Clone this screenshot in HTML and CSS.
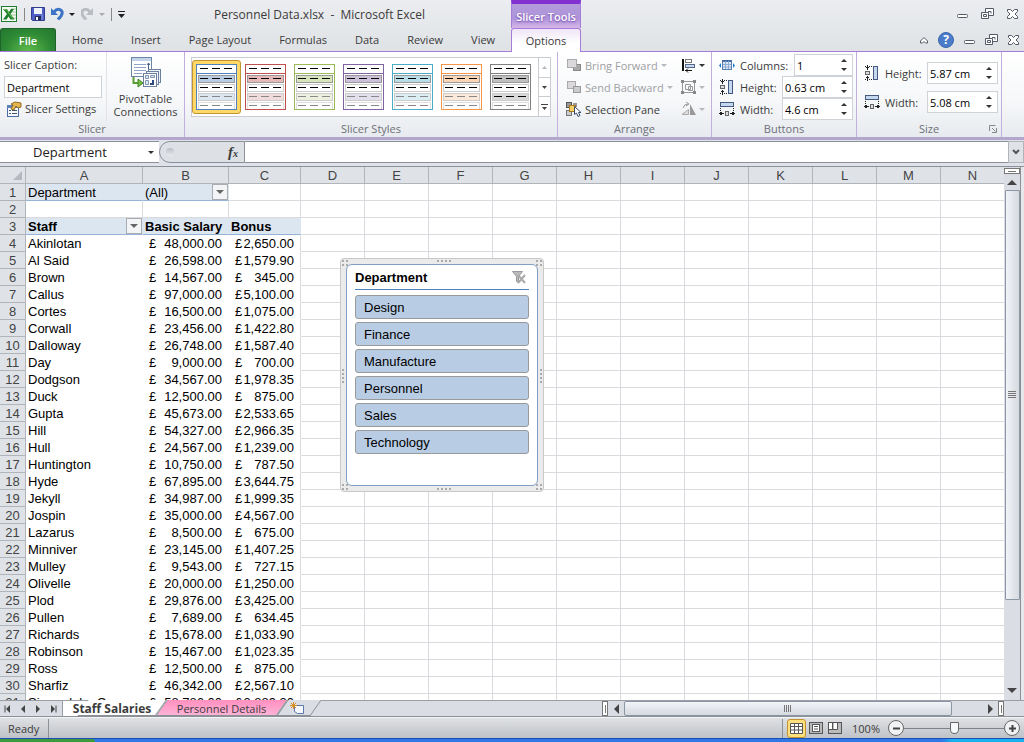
FILE: index.html
```html
<!DOCTYPE html>
<html lang="en">
<head>
    <meta charset="UTF-8">
    <meta name="viewport" content="width=device-width, initial-scale=1.0">
    <title>Personnel Data.xlsx - Microsoft Excel</title>
    <link rel="stylesheet" href="styles.css">
</head>
<body>

    <!-- shared icon shapes -->
    <svg class="defs" width="0" height="0" aria-hidden="true">
        <symbol id="thumb" viewBox="0 0 41 46">
            <rect x="0.5" y="0.5" width="40" height="45" fill="#fff" stroke="var(--edge)"/>
            <path d="M0 9.5h41" stroke="var(--edge)"/>
            <rect x="2.5" y="11.5" width="36" height="7" fill="var(--fill)" stroke="#999"/>
            <rect x="2.5" y="20.5" width="36" height="7" fill="#fff" stroke="#ccc"/>
            <rect x="2.5" y="29.5" width="36" height="7" fill="var(--pale)" stroke="#ccc"/>
            <path d="M2.5 45v-6.5h36v6.5" fill="#fff" stroke="#ddd"/>
            <path d="M4 4.5h8m4 0h8m4 0h8M4 14.5h8m4 0h8m4 0h8M4 23.5h8m4 0h8m4 0h8" stroke="#000"/>
            <path d="M4 32.5h8m4 0h8m4 0h8" stroke="var(--dash)"/>
            <path d="M4 41.5h8m4 0h8m4 0h8" stroke="#888"/>
        </symbol>
        <symbol id="row-height" viewBox="0 0 16 16">
            <path d="M1 1.5h8M1 14.5h8" stroke="#222" stroke-dasharray="1 1"/>
            <path d="M3.5 0v5M3.5 11v5" stroke="#222"/>
            <path d="M2 2.5h3M2 12.5h3" stroke="#222"/>
            <rect x="1.5" y="6.5" width="4" height="3" fill="#ddd" stroke="#666"/>
            <rect x="9.5" y="1.5" width="4" height="13" fill="#c5d8ee" stroke="#455a80"/>
        </symbol>
        <symbol id="col-width" viewBox="0 0 16 16">
            <rect x="1.5" y="1.5" width="13" height="4" fill="#c5d8ee" stroke="#455a80"/>
            <path d="M1.5 7v8M14.5 7v8" stroke="#222" stroke-dasharray="1 1"/>
            <path d="M0 12.5h5M11 12.5h5" stroke="#222"/>
            <path d="M2.5 11v3M13.5 11v3" stroke="#222"/>
            <rect x="6.5" y="10.5" width="3" height="4" fill="#ddd" stroke="#666"/>
        </symbol>
        <symbol id="minimize" viewBox="0 0 13 12">
            <rect x="1.5" y="6.5" width="10" height="3" rx="1" fill="#fff" stroke="#555b66"/>
        </symbol>
        <symbol id="restore" viewBox="0 0 13 12">
            <path d="M4.5 0.5h8v7h-8z" fill="#fff" stroke="#555b66"/>
            <path d="M7 3.5h3v2" fill="none" stroke="#555b66"/>
            <path d="M0.5 4.5h7v6h-7z" fill="#fff" stroke="#555b66"/>
            <path d="M2.5 6.5h3v2h-3z" fill="#fff" stroke="#555b66"/>
        </symbol>
        <symbol id="close" viewBox="0 0 13 12">
            <path d="M1.5 1.5h3l2 2 2-2h3v2l-2.500 2.500 2.500 2.500v2h-3l-2-2-2 2h-3v-2l2.500-2.500-2.500-2.500z" fill="#fff" stroke="#555b66"/>
        </symbol>
    </svg>

    <header class="header">
        <div class="titlebar">
            <div class="quick-access">
                <svg width="17" height="17" viewBox="0 0 17 17">
                    <rect x="0.5" y="0.5" width="15" height="15" fill="#f4f9f1" stroke="#1f7a33"/>
                    <path d="M10 3h5M10 6h5M10 9h5M10 12h5" stroke="#9bc79a"/>
                    <path d="M2 3h4l2 3 2-3h3l-3.500 5 4 5.500h-4l-2-3-2 3h-3.500l4-5.500z" fill="#1d7e2f"/>
                    <path d="M3 3.5h2.500l6 9" fill="none" stroke="#6cc04e"/>
                </svg>
                <i class="bar"></i>
                <button class="plain" aria-label="Save">
                    <svg width="14" height="14" viewBox="0 0 14 14">
                        <path d="M0.5 0.5h13v13h-12l-1-1z" fill="#4f5fc4" stroke="#333c8e"/>
                        <rect x="3" y="1" width="8" height="6" fill="#eef2fb"/>
                        <path d="M11 7v6" stroke="#8b98e0"/>
                        <rect x="4" y="9" width="6" height="4" fill="#222a5c"/>
                        <rect x="5" y="10" width="2" height="3" fill="#fff"/>
                    </svg>
                </button>
                <button class="plain undo" aria-label="Undo">
                    <svg width="24" height="14" viewBox="0 0 24 14">
                        <path d="M3 5c4-5 9-2 8 2-1 3-3 4-4 5.500" fill="none" stroke="#3d73c4" stroke-width="3"/>
                        <path d="M0 1v7h7z" fill="#3d73c4"/>
                        <path d="M18 6h6l-3 3z" fill="#222"/>
                    </svg>
                </button>
                <button class="plain redo" aria-label="Redo">
                    <svg width="24" height="14" viewBox="0 0 24 14">
                        <path d="M9 5c-4-5-9-2-8 2 1 3 3 4 4 5.500" fill="none" stroke="#b9bcc1" stroke-width="3"/>
                        <path d="M12 1v7h-7z" fill="#b9bcc1"/>
                        <path d="M18 6h6l-3 3z" fill="#aaa"/>
                    </svg>
                </button>
                <i class="bar"></i>
                <button class="plain" aria-label="Customize toolbar">
                    <svg width="7" height="8" viewBox="0 0 7 8"><path d="M0 1.5h7" stroke="#222"/><path d="M0 4h7l-3.500 4z" fill="#222"/></svg>
                </button>
            </div>
            <h1 class="title">Personnel Data.xlsx&nbsp; -&nbsp; Microsoft Excel</h1>
        </div>
        <div class="context-title">Slicer Tools</div>
        <div class="window-buttons">
            <button class="plain" aria-label="Minimize"><svg width="13" height="12"><use href="#minimize"/></svg></button>
            <button class="plain" aria-label="Restore"><svg width="13" height="12"><use href="#restore"/></svg></button>
            <button class="plain" aria-label="Close"><svg width="13" height="12"><use href="#close"/></svg></button>
        </div>

        <nav class="tabs">
            <a class="tab file" href="#">File</a>
            <a class="tab" href="#">Home</a>
            <a class="tab" href="#">Insert</a>
            <a class="tab" href="#">Page Layout</a>
            <a class="tab" href="#">Formulas</a>
            <a class="tab" href="#">Data</a>
            <a class="tab" href="#">Review</a>
            <a class="tab" href="#">View</a>
        </nav>
        <a class="context-tab" href="#">Options</a>
        <div class="book-buttons">
            <button class="plain" aria-label="Minimize ribbon">
                <svg width="10" height="8" viewBox="0 0 10 8"><path d="M1.5 5l3.500-3.500 3.500 3.500v2h-2l-1.500-1.500-1.500 1.500h-2z" fill="#fff" stroke="#555b66"/></svg>
            </button>
            <button class="help" aria-label="Help">?</button>
            <button class="plain" aria-label="Minimize workbook"><svg width="13" height="12"><use href="#minimize"/></svg></button>
            <button class="plain" aria-label="Restore workbook"><svg width="13" height="12"><use href="#restore"/></svg></button>
            <button class="plain" aria-label="Close workbook"><svg width="13" height="12"><use href="#close"/></svg></button>
        </div>
    </header>

    <section class="ribbon">
        <div class="group slicer-group">
            <div class="group-body">
                <div class="caption-box">
                    <label for="caption">Slicer Caption:</label>
                    <input class="box" id="caption" type="text" value="Department">
                    <button class="command">
                        <svg width="16" height="16" viewBox="0 0 16 16">
                            <rect x="1.5" y="4.5" width="11" height="11" fill="#f5f8fd" stroke="#4d6ea3"/>
                            <rect x="1" y="4" width="12" height="3" fill="#5d83bb"/>
                            <path d="M3 9.5h2M3 12.5h2M6 9.5h5M6 12.5h5" stroke="#456"/>
                            <path d="M5 3l4-2 6 1v4l-3 1-2-2-2 4-3-1 2-4z" fill="#e5b54d" stroke="#8f6a24"/>
                        </svg>
                        Slicer Settings
                    </button>
                </div>
                <button class="big-command">
                    <svg width="30" height="31" viewBox="0 0 30 31">
                        <rect x="0.5" y="0.5" width="20" height="19" fill="#fff" stroke="#6c86a8"/>
                        <rect x="1" y="1" width="19" height="3" fill="#c3d3e8"/>
                        <path d="M3 7.5h12M3 10.5h12M3 13.5h12M3 16.5h8" stroke="#8da6c8"/>
                        <path d="M17.5 6v10M16 8l1.500-2 1.500 2" fill="none" stroke="#4a6288"/>
                        <rect x="17.5" y="12.5" width="12" height="13" fill="#eef3f9" stroke="#6c7f9c"/>
                        <rect x="15.5" y="14.5" width="12" height="13" fill="#eef3f9" stroke="#6c7f9c"/>
                        <rect x="12.5" y="16.5" width="13" height="13" fill="#fff" stroke="#6c7f9c"/>
                        <path d="M14.5 18.5h3v3h-3zM19.5 18.5h4v2h-4zM14.5 23.5h3v4h-3z" fill="#dbe5f2" stroke="#8296b5"/>
                        <path d="M19 27h3v-4" fill="none" stroke="#2b4a80" stroke-width="2"/>
                        <path d="M2.5 20v6h5" fill="none" stroke="#5a9c33" stroke-width="2"/>
                        <path d="M7 22l5 4-5 4z" fill="#76c043" stroke="#3f8425"/>
                    </svg>
                    <span>PivotTable<br>Connections</span>
                </button>
            </div>
            <h2>Slicer</h2>
        </div>

        <div class="group styles-group">
            <div class="gallery">
                <button class="style blue selected" aria-label="Blue"><svg width="41" height="46"><use href="#thumb"/></svg></button>
                <button class="style red" aria-label="Red"><svg width="41" height="46"><use href="#thumb"/></svg></button>
                <button class="style green" aria-label="Green"><svg width="41" height="46"><use href="#thumb"/></svg></button>
                <button class="style purple" aria-label="Purple"><svg width="41" height="46"><use href="#thumb"/></svg></button>
                <button class="style aqua" aria-label="Aqua"><svg width="41" height="46"><use href="#thumb"/></svg></button>
                <button class="style orange" aria-label="Orange"><svg width="41" height="46"><use href="#thumb"/></svg></button>
                <button class="style dark" aria-label="Dark"><svg width="41" height="46"><use href="#thumb"/></svg></button>
                <div class="gallery-scroll">
                    <button class="plain" aria-label="Scroll up" disabled><svg width="5" height="3"><path d="M0 3h5l-2.500-3z" fill="#b5b8bd"/></svg></button>
                    <button class="plain" aria-label="Scroll down"><svg width="5" height="3"><path d="M0 0h5l-2.500 3z" fill="#444"/></svg></button>
                    <button class="plain" aria-label="More styles"><svg width="7" height="6"><path d="M0 0.5h7" stroke="#444"/><path d="M1 3h5l-2.500 3z" fill="#444"/></svg></button>
                </div>
            </div>
            <h2>Slicer Styles</h2>
        </div>

        <div class="group arrange-group">
            <div class="group-body">
                <div class="commands">
                    <button class="command" disabled>
                        <svg width="16" height="16" viewBox="0 0 16 16">
                            <rect x="7.5" y="7.5" width="7" height="6" fill="#aaa" stroke="#888"/>
                            <rect x="1.5" y="2.5" width="9" height="8" fill="#dcd9dc" stroke="#aaa"/>
                        </svg>
                        Bring Forward <i class="arrow"></i>
                    </button>
                    <button class="command" disabled>
                        <svg width="16" height="16" viewBox="0 0 16 16">
                            <rect x="1.5" y="2.5" width="8" height="7" fill="#dcd9dc" stroke="#aaa"/>
                            <rect x="7.5" y="7.5" width="7" height="6" fill="#ccc" stroke="#999"/>
                        </svg>
                        Send Backward <i class="arrow"></i>
                    </button>
                    <button class="command">
                        <svg width="16" height="16" viewBox="0 0 16 16">
                            <rect x="0.5" y="1.5" width="5" height="5" fill="#999" stroke="#555"/>
                            <rect x="0.5" y="9.5" width="5" height="5" fill="#ccc" stroke="#777"/>
                            <rect x="7" y="2" width="4" height="4" fill="#999"/>
                            <rect x="3.5" y="4.5" width="6" height="6" fill="#f7cf6b" stroke="#a97a1c"/>
                            <path d="M8.5 5.5v8l2-1.500 1.500 3.500 2-1-1.500-3h2.500z" fill="#fff" stroke="#3c4f70"/>
                        </svg>
                        Selection Pane
                    </button>
                </div>
                <div class="icon-commands">
                    <button class="command" aria-label="Align">
                        <svg width="16" height="16" viewBox="0 0 16 16">
                            <path d="M2 2v12" stroke="#111" stroke-width="2"/>
                            <rect x="4.5" y="2.5" width="6" height="3" fill="#fff" stroke="#777"/>
                            <rect x="4.5" y="7.5" width="9" height="3" fill="#c9d8ec" stroke="#55698d"/>
                            <path d="M4 13.5h7M7 11.5l-2 2 2 2" fill="none" stroke="#111"/>
                        </svg>
                        <i class="arrow dark-arrow"></i>
                    </button>
                    <button class="command" aria-label="Group" disabled>
                        <svg width="16" height="16" viewBox="0 0 16 16">
                            <path d="M1.5 2.5h12v11h-12zM4.5 5.5h5v5h-5zM7.5 7.5h4v4h-4z" fill="none" stroke="#999"/>
                            <path d="M0 1h3v3h-3zM12 1h3v3h-3zM0 12h3v3h-3zM12 12h3v3h-3z" fill="#888"/>
                        </svg>
                        <i class="arrow"></i>
                    </button>
                    <button class="command" aria-label="Rotate" disabled>
                        <svg width="16" height="16" viewBox="0 0 16 16">
                            <path d="M9 14v-11l6 11z" fill="#999"/>
                            <path d="M7.5 13.5h-6.500l6.500-5z" fill="#ddd" stroke="#aaa"/>
                            <path d="M2 7q1-4 5-4M5 1l3 2-3 2" fill="none" stroke="#999"/>
                        </svg>
                        <i class="arrow"></i>
                    </button>
                </div>
            </div>
            <h2>Arrange</h2>
        </div>

        <div class="group buttons-group">
            <div class="fields">
                <div class="field">
                    <svg width="16" height="16" viewBox="0 0 16 16">
                        <rect x="3.5" y="3.5" width="9" height="9" fill="#dce8f7" stroke="#5b7db0"/>
                        <rect x="3" y="3" width="10" height="2" fill="#456aa5"/>
                        <path d="M6.5 4v8M9.5 4v8M4 7.5h8M4 10h8" stroke="#8fabd0"/>
                        <path d="M2 6v5l-2-2.500zM14 6v5l2-2.500z" fill="#1f7ad0"/>
                    </svg>
                    <label for="columns">Columns:</label>
                    <span class="spin"><input id="columns" type="text" value="1"><i class="spinner"></i></span>
                </div>
                <div class="field">
                    <svg width="16" height="16"><use href="#row-height"/></svg>
                    <label for="button-height">Height:</label>
                    <span class="spin"><input id="button-height" type="text" value="0.63 cm"><i class="spinner"></i></span>
                </div>
                <div class="field">
                    <svg width="16" height="16"><use href="#col-width"/></svg>
                    <label for="button-width">Width:</label>
                    <span class="spin"><input id="button-width" type="text" value="4.6 cm"><i class="spinner"></i></span>
                </div>
            </div>
            <h2>Buttons</h2>
        </div>

        <div class="group size-group">
            <div class="fields">
                <div class="field">
                    <svg width="16" height="16"><use href="#row-height"/></svg>
                    <label for="height">Height:</label>
                    <span class="spin"><input id="height" type="text" value="5.87 cm"><i class="spinner"></i></span>
                </div>
                <div class="field">
                    <svg width="16" height="16"><use href="#col-width"/></svg>
                    <label for="width">Width:</label>
                    <span class="spin"><input id="width" type="text" value="5.08 cm"><i class="spinner"></i></span>
                </div>
            </div>
            <h2>Size</h2>
            <button class="plain launcher" aria-label="Size and properties">
                <svg width="8" height="8" viewBox="0 0 8 8"><path d="M0.5 6v-5.500h6M3 3l3.500 3.500M7.500 3v4.500h-4.500" fill="none" stroke="#888"/></svg>
            </button>
        </div>
    </section>

    <div class="formula-bar">
        <input class="name-box" type="text" value="Department" aria-label="Name box">
        <button class="plain name-arrow" aria-label="Names"><i class="arrow dark-arrow"></i></button>
        <div class="fx"><i class="knob"></i><em>f<sub>x</sub></em></div>
        <input class="formula" type="text" aria-label="Formula">
        <button class="plain expand" aria-label="Expand formula bar">
            <svg width="8" height="6" viewBox="0 0 8 6"><path d="M1 1l3 3 3-3" fill="none" stroke="#555" stroke-width="2"/></svg>
        </button>
    </div>

    <main class="workbook">
        <div class="sheet">
            <table class="grid">
                <colgroup id="cols"></colgroup>
                <thead><tr id="letters"></tr></thead>
                <tbody id="rows"></tbody>
            </table>

            <div class="slicer">
                <i class="grip top"></i>
                <i class="grip bottom"></i>
                <i class="grip left"></i>
                <i class="grip right"></i>
                <i class="grip corner nw"></i>
                <i class="grip corner ne"></i>
                <i class="grip corner sw"></i>
                <i class="grip corner se"></i>
                <div class="slicer-panel">
                    <div class="slicer-head">
                        <h3>Department</h3>
                        <button class="plain" aria-label="Clear filter">
                            <svg width="14" height="13" viewBox="0 0 14 13">
                                <path d="M0.5 0.5h10l-4 5v6l-2-1v-5z" fill="#bbb" stroke="#999"/>
                                <path d="M6 4l7 8M13 4l-7 8" stroke="#aaa" stroke-width="2"/>
                            </svg>
                        </button>
                    </div>
                    <button class="item">Design</button>
                    <button class="item">Finance</button>
                    <button class="item">Manufacture</button>
                    <button class="item">Personnel</button>
                    <button class="item">Sales</button>
                    <button class="item">Technology</button>
                </div>
            </div>
        </div>
        <div class="vscroll">
            <i class="split"></i>
            <button class="plain" aria-label="Scroll up"><i class="tri up"></i></button>
            <div class="vthumb"><i class="lines"></i></div>
            <span class="vtrack"></span>
            <button class="plain" aria-label="Scroll down"><i class="tri down"></i></button>
        </div>
        <div class="edge"></div>
    </main>

    <div class="sheet-bar">
        <div class="sheet-nav">
            <button class="plain" aria-label="First sheet"><svg width="8" height="8"><path d="M1 0.5v7" stroke="#444"/><path d="M6 0v8l-4-4z" fill="#444"/></svg></button>
            <button class="plain" aria-label="Previous sheet"><svg width="8" height="8"><path d="M6 0v8l-4-4z" fill="#444"/></svg></button>
            <button class="plain" aria-label="Next sheet"><svg width="8" height="8"><path d="M2 0v8l4-4z" fill="#444"/></svg></button>
            <button class="plain" aria-label="Last sheet"><svg width="8" height="8"><path d="M7 0.5v7" stroke="#444"/><path d="M2 0v8l4-4z" fill="#444"/></svg></button>
        </div>
        <a class="sheet-tab active" href="#">Staff Salaries</a>
        <a class="sheet-tab pink" href="#">Personnel Details</a>
        <button class="sheet-tab new" aria-label="Insert worksheet">
            <svg width="15" height="13" viewBox="0 0 15 13">
                <path d="M4.5 3.5h9v8h-6l-3-2z" fill="#f4f7fc" stroke="#5a78ad"/>
                <path d="M3.5 0v7M0 3.5h7M1 1l5 5M6 1l-5 5" stroke="#d89024"/>
            </svg>
        </button>
        <div class="hscroll">
            <i class="vsplit"></i>
            <button class="plain" aria-label="Scroll left"><i class="tri left-tri"></i></button>
            <div class="hthumb"><i class="vlines"></i></div>
            <span class="htrack"></span>
            <button class="plain" aria-label="Scroll right"><i class="tri right-tri"></i></button>
            <i class="vsplit"></i>
        </div>
    </div>

    <footer class="status">
        <span class="ready">Ready</span>
        <div class="views">
            <button class="view-button on" aria-label="Normal">
                <svg width="13" height="11" viewBox="0 0 13 11"><path d="M0.5 0.5h12v10h-12zM0 3.5h13M0 7h13M4.5 0v11M8.5 0v11" fill="#fff" stroke="#555"/></svg>
            </button>
            <button class="view-button" aria-label="Page layout">
                <svg width="14" height="12" viewBox="0 0 14 12"><rect x="0.5" y="0.5" width="13" height="11" fill="#bbb" stroke="#555"/><rect x="3.5" y="2.5" width="7" height="7" fill="#fff" stroke="#555"/><path d="M5 4.5h4M5 7h4" stroke="#555"/></svg>
            </button>
            <button class="view-button" aria-label="Page break preview">
                <svg width="14" height="12" viewBox="0 0 14 12"><rect x="0.5" y="0.5" width="13" height="11" fill="#bbb" stroke="#555"/><path d="M1 1h3v6h-3zM6 1h3v6h-3z" fill="#fff"/><path d="M4.5 0v7.500M9.500 0v7.500h-9" fill="none" stroke="#555"/></svg>
            </button>
        </div>
        <label class="percent" for="zoom">100%</label>
        <button class="round" aria-label="Zoom out"><svg width="9" height="9"><path d="M1 4.5h7" stroke="#444" stroke-width="2"/></svg></button>
        <input class="zoom" id="zoom" type="range" min="0" max="100" value="50">
        <button class="round" aria-label="Zoom in"><svg width="9" height="9"><path d="M1 4.5h7M4.5 1v7" stroke="#444" stroke-width="2"/></svg></button>
    </footer>
    <div class="taskbar"><span class="start"></span></div>

    <script src="script.js"></script>
</body>
</html>
```
FILE: styles.css
```css
* {
    box-sizing: border-box;
}

body {
    margin: 0;
    height: 100vh;
    display: flex;
    flex-direction: column;
    overflow: hidden;
    font-family: "Open Sans", "Noto Sans", sans-serif;
    font-size: 12px;
    color: #3b3b3b;
    background: #e4e7eb;
}

h1, h2, h3 {
    margin: 0;
    font-weight: normal;
}

button, input {
    font: inherit;
    color: inherit;
}

a {
    color: inherit;
    text-decoration: none;
}

svg {
    display: block;
    flex: none;
}

.defs {
    position: absolute;
}

.plain {
    display: flex;
    align-items: center;
    justify-content: center;
    padding: 0;
    border: none;
    background: none;
}

/* title bar and tabs */

.header {
    flex: none;
    display: grid;
    grid-template-columns: 511px 70px 1fr;
    grid-template-rows: 28px 24px;
    background: linear-gradient(#ebedf0, #dfe2e5);
}

.titlebar {
    display: flex;
    align-items: center;
}

.quick-access {
    display: flex;
    align-items: center;
    gap: 6px;
    width: 128px;
    height: 22px;
    padding-left: 1px;
}

.bar {
    width: 1px;
    height: 13px;
    background: #888;
}

.title {
    flex: 1;
    text-align: center;
    font-size: 12px;
}

.context-title {
    border-top: 4px solid #8230d2;
    border-left: 1px solid #a77bd8;
    border-right: 1px solid #a77bd8;
    background: linear-gradient(#b29bdb, #ae93da 60%, #d6b6e8);
    color: #fff;
    font-size: 11px;
    font-weight: 600;
    line-height: 25px;
    text-align: center;
    white-space: nowrap;
    text-shadow: 0 1px 2px #6a3aa8;
}

.window-buttons, .book-buttons {
    display: flex;
    align-items: center;
    justify-content: flex-end;
    gap: 12px;
    padding-right: 5px;
}

.book-buttons {
    gap: 9px;
    padding-right: 4px;
    border-bottom: 1px solid #a77bd8;
}

.help {
    width: 16px;
    height: 16px;
    padding: 0;
    border: 1px solid #3a65ad;
    border-radius: 50%;
    background: #4a7cc9;
    color: #fff;
    font-size: 12px;
    font-weight: bold;
    line-height: 14px;
}

.tabs {
    display: flex;
    border-bottom: 1px solid #a77bd8;
}

.tab {
    padding: 0 14px;
    font-size: 11px;
    line-height: 24px;
    white-space: nowrap;
}

.tab.file {
    width: 56px;
    margin-right: 2px;
    padding: 0;
    border: 1px solid #1d6428;
    border-bottom: none;
    border-radius: 3px 3px 0 0;
    background: radial-gradient(ellipse at bottom, #5fb94a, #2d8a35 60%, #24762e);
    color: #fff;
    font-weight: 600;
    text-align: center;
}

.context-tab {
    border: 1px solid #a77bd8;
    border-bottom: none;
    border-radius: 3px 3px 0 0;
    background: linear-gradient(#f0e4f6, #fff 60%);
    font-size: 11px;
    line-height: 23px;
    text-align: center;
}

/* ribbon */

.ribbon {
    flex: none;
    display: flex;
    height: 88px;
    border-bottom: 3px solid #b3a6cc;
    background: linear-gradient(#fff, #f5f7f9 60%, #e7eaee);
    font-size: 11px;
}

.group {
    display: flex;
    flex-direction: column;
    flex: none;
    border-right: 1px solid #c3aee0;
}

.group h2 {
    margin-top: auto;
    color: #6d7078;
    font-size: 11px;
    line-height: 16px;
    text-align: center;
}

.group-body {
    display: flex;
    flex: 1;
}

.slicer-group {
    width: 185px;
}

.styles-group {
    width: 373px;
    padding: 5px 6px 0;
}

.arrange-group {
    width: 154px;
}

.buttons-group {
    width: 145px;
}

.size-group {
    width: 145px;
    position: relative;
}

.caption-box {
    display: flex;
    flex-direction: column;
    width: 107px;
    padding: 5px 4px 0;
    border-right: 1px solid #e1e3e6;
    line-height: 16px;
}

.box {
    width: 98px;
    height: 22px;
    margin-top: 3px;
    padding: 0 2px;
    border: 1px solid #cfd2d6;
    background: #fff;
    color: #000;
}

.command {
    display: flex;
    align-items: center;
    gap: 3px;
    height: 22px;
    padding: 0 2px;
    border: none;
    background: none;
    white-space: nowrap;
}

.command:disabled {
    color: #a0a0a4;
}

.big-command {
    flex: 1;
    display: flex;
    flex-direction: column;
    align-items: center;
    gap: 4px;
    padding: 5px 0 0;
    border: none;
    background: none;
    line-height: 13px;
}

.gallery {
    display: flex;
    align-items: center;
    height: 60px;
    border: 1px solid #c9ccd1;
    background: #fff;
}

.style {
    display: flex;
    align-items: center;
    justify-content: center;
    width: 49px;
    height: 54px;
    padding: 0;
    border: none;
    background: none;
    --dash: #888;
}

.style.selected {
    border: 1px solid #c29331;
    border-radius: 3px;
    background: #ffd867;
}

.blue { --edge: #4f81bd; --fill: #b8cce4; --pale: #dce6f1; }
.red { --edge: #c0504d; --fill: #e6b8b7; --pale: #f2dcdb; }
.green { --edge: #9bbb59; --fill: #d8e4bc; --pale: #ebf1de; }
.purple { --edge: #8064a2; --fill: #ccc0da; --pale: #e4dfec; }
.aqua { --edge: #4bacc6; --fill: #b7dee8; --pale: #daeef3; }
.orange { --edge: #f79646; --fill: #fcd5b4; --pale: #fde9d9; }
.style.dark { --edge: #7f7f7f; --fill: #bfbfbf; --pale: #d9d9d9; --dash: #000; }

.gallery-scroll {
    flex: 1;
    align-self: stretch;
    display: flex;
    flex-direction: column;
    margin-left: 3px;
    border-left: 1px solid #c9ccd1;
}

.gallery-scroll .plain {
    flex: 1;
}

.gallery-scroll .plain + .plain {
    border-top: 1px solid #c9ccd1;
}

.commands {
    display: flex;
    flex-direction: column;
    width: 116px;
    padding: 2px 0 0 6px;
}

.icon-commands {
    padding-top: 2px;
    padding-left: 5px;
}

.icon-commands .command {
    gap: 2px;
}

.arrow {
    border: 3px solid transparent;
    border-top-color: #b5b8bd;
    border-bottom: none;
}

.dark-arrow {
    border-top-color: #333;
}

.fields {
    padding: 2px 3px 0 7px;
}

.field {
    display: flex;
    align-items: center;
    height: 22px;
}

.field label {
    margin-left: 5px;
    white-space: nowrap;
}

.spin {
    display: flex;
    align-items: center;
    width: 71px;
    height: 22px;
    margin-left: auto;
    border: 1px solid #cfd2d6;
    background: #fff;
    color: #000;
}

.spin input {
    flex: 1;
    min-width: 0;
    padding: 0 2px;
    border: none;
    background: none;
}

.buttons-group .field:first-child .spin {
    width: 59px;
}

.spinner {
    display: flex;
    flex-direction: column;
    gap: 6px;
    margin-right: 5px;
}

.spinner::before, .spinner::after {
    content: "";
    border: 3px solid transparent;
}

.spinner::before {
    border-top: none;
    border-bottom-color: #333;
}

.spinner::after {
    border-bottom: none;
    border-top-color: #333;
}

.size-group .fields {
    padding-top: 10px;
}

.size-group .field + .field {
    margin-top: 7px;
}

.launcher {
    position: absolute;
    right: 4px;
    bottom: 4px;
}

/* formula bar */

.formula-bar {
    flex: none;
    display: flex;
    height: 27px;
    padding: 1px 0 3px;
    border-bottom: 1px solid #8c9097;
    background: #dfe2ea;
    font-size: 13px;
}

.name-box {
    width: 143px;
    padding: 0 0 0 33px;
    border: solid #8c9097;
    border-width: 1px 0;
    background: #fff;
    color: #222;
}

.name-arrow {
    width: 16px;
    border: solid #8c9097;
    border-width: 1px 0;
    background: #fff;
}

.fx {
    display: flex;
    align-items: center;
    justify-content: space-between;
    width: 86px;
    padding: 0 6px;
    border: 1px solid #8c9097;
    border-radius: 12px 0 0 12px;
    background: #dde1e6;
    font-family: "Liberation Serif", serif;
    font-size: 15px;
    font-weight: bold;
}

.fx sub {
    font-size: 10px;
    vertical-align: baseline;
}

.knob {
    width: 8px;
    height: 8px;
    border-radius: 50%;
    background: linear-gradient(#b9bdc4, #e9ebee);
}

.formula {
    flex: 1;
    min-width: 0;
    border: solid #8c9097;
    border-width: 1px 0;
    background: #fff;
}

.expand {
    width: 16px;
    border: 1px solid #b1b5ba;
    background: #dfe2e6;
}

/* worksheet */

.workbook {
    flex: 1;
    display: flex;
    min-height: 0;
}

.sheet {
    position: relative;
    flex: 1;
    min-width: 0;
    overflow: hidden;
    background: #fff;
    font-family: "Liberation Sans", Arial, sans-serif;
    font-size: 13px;
    color: #000;
}

.grid {
    width: 1005px;
    table-layout: fixed;
    border-collapse: separate;
    border-spacing: 0;
}

.col-head {
    width: 26px;
}

.col-a {
    width: 117px;
}

.col-b {
    width: 86px;
}

.col-c {
    width: 72px;
}

.grid th, .grid td {
    height: 17px;
    padding: 1px 0 0 2px;
    border-right: 1px solid #d9dbde;
    border-bottom: 1px solid #d9dbde;
    line-height: 15px;
    text-align: left;
    white-space: nowrap;
}

.grid .head {
    padding: 1px 0 0;
    border-color: #b1b5ba;
    background: #dfe3e8;
    color: #444;
    font-size: 13px;
    font-weight: normal;
    text-align: center;
}

.grid .select-all::after {
    content: "";
    display: block;
    width: 9px;
    height: 9px;
    margin-left: 13px;
    background: #b5b9bf;
    clip-path: polygon(100% 0, 100% 100%, 0 100%);
}

.grid td.filled {
    border-right-color: #fff;
    border-bottom-color: #fff;
}

.grid td.last {
    border-right-color: #d9dbde;
}

.grid td.shaded {
    border-right-color: #dce6f1;
    border-bottom-color: #95b3d7;
    background: #dce6f1;
}

.grid .bold {
    font-weight: bold;
}

.cell {
    display: flex;
    justify-content: space-between;
    height: 15px;
}

.money {
    padding: 0 6px 0 4px;
}

.filter {
    display: flex;
    align-items: center;
    justify-content: center;
    width: 16px;
    height: 16px;
    margin-top: -1px;
    padding: 0;
    border: 1px solid #a9adb3;
    background: #f3f4f6;
}

.filter .arrow {
    border-width: 4px;
    border-bottom: none;
    border-top-color: #666;
}

/* slicer */

.slicer {
    position: absolute;
    left: 340px;
    top: 91px;
    width: 204px;
    height: 234px;
    padding: 5px;
    border: 1px solid #c8c8c8;
    border-radius: 4px;
    background: #ebebeb;
}

.slicer-panel {
    display: flex;
    flex-direction: column;
    gap: 3px;
    height: 100%;
    padding: 0 8px;
    border: 1px solid #7f9fc6;
    border-radius: 6px;
    background: #fff;
}

.slicer-head {
    display: flex;
    align-items: center;
    justify-content: space-between;
    height: 25px;
    margin-bottom: 2px;
    padding-right: 3px;
    border-bottom: 1px solid #4f81bd;
}

.slicer-head h3 {
    font-size: 13px;
    font-weight: bold;
}

.item {
    height: 24px;
    padding: 0 8px;
    border: 1px solid #999;
    border-radius: 3px;
    background: #b8cce4;
    text-align: left;
}

.grip {
    position: absolute;
    background: radial-gradient(circle, #aaa 1px, transparent 1px) 0 0 / 4px 4px;
}

.grip.top, .grip.bottom {
    left: 95px;
    width: 16px;
    height: 4px;
}

.grip.left, .grip.right {
    top: 109px;
    width: 4px;
    height: 16px;
}

.grip.corner {
    width: 8px;
    height: 8px;
}

.top, .nw, .ne {
    top: 0;
}

.bottom, .sw, .se {
    bottom: 0;
}

.left, .nw, .sw {
    left: 0;
}

.right, .ne, .se {
    right: 0;
}

/* scroll bars */

.vscroll {
    flex: none;
    display: flex;
    flex-direction: column;
    align-items: center;
    width: 16px;
    padding: 1px 0 2px;
    background: #dadee4;
}

.split {
    width: 16px;
    height: 6px;
    border: 1px solid #777;
    background: linear-gradient(#777, #777) center / 8px 1px no-repeat #fff;
}

.vscroll .plain {
    height: 16px;
}

.tri {
    border: 5px solid transparent;
}

.up {
    border-top: none;
    border-bottom-color: #444;
}

.down {
    border-bottom: none;
    border-top-color: #444;
}

.left-tri {
    border-left: none;
    border-right-color: #444;
}

.right-tri {
    border-right: none;
    border-left-color: #444;
}

.vthumb {
    flex: 410;
    display: flex;
    align-items: center;
    justify-content: center;
    width: 15px;
    border: 1px solid #8c95a3;
    border-radius: 1px;
    background: linear-gradient(to right, #f2f4f7, #d5dae1);
}

.lines {
    width: 8px;
    height: 8px;
    background: repeating-linear-gradient(#777 0 1px, transparent 1px 2px);
}

.vtrack {
    flex: 83;
}

.edge {
    flex: none;
    width: 4px;
    border-left: 1px solid #8c9097;
    background: #e6e8eb;
}

.sheet-bar {
    flex: none;
    display: flex;
    height: 17px;
    border-top: 1px solid #9a9ea5;
    border-bottom: 1px solid #8c9097;
    background: #dadee4;
}

.sheet-nav {
    display: flex;
    align-items: center;
    gap: 7px;
    width: 63px;
    padding-left: 4px;
    border-right: 1px solid #9a9ea5;
}

.sheet-tab {
    position: relative;
    z-index: 0;
    padding: 0;
    border: none;
    background: none;
    font-size: 12px;
    line-height: 15px;
    text-align: center;
    white-space: nowrap;
}

.sheet-tab::before {
    content: "";
    position: absolute;
    z-index: -1;
    inset: -1px 0 0;
    border: 1px solid #8c9097;
    border-top: none;
    background: #dadee4;
    transform: skewX(-35deg);
}

.sheet-tab.active {
    z-index: 2;
    width: 98px;
    background: linear-gradient(to right, #fff 80%, transparent 80%);
    font-weight: bold;
}

.sheet-tab.active::before {
    left: 20px;
    border-left: none;
    background: #fff;
}

.sheet-tab.pink {
    z-index: 1;
    width: 121px;
    font-size: 11px;
}

.sheet-tab.pink::before {
    background: linear-gradient(#ff8fc0, #ffb3d6);
}

.sheet-tab.new {
    width: 34px;
    padding-left: 8px;
}

.hscroll {
    display: flex;
    align-items: center;
    flex: 1;
    max-width: 422px;
    margin-left: auto;
    padding-right: 20px;
}

.vsplit {
    width: 6px;
    height: 15px;
    border: 1px solid #777;
    background: linear-gradient(#777, #777) center / 1px 8px no-repeat #fff;
}

.hscroll .plain {
    width: 16px;
}

.hthumb {
    flex: 328;
    display: flex;
    align-items: center;
    justify-content: center;
    height: 15px;
    border: 1px solid #8c95a3;
    border-radius: 2px;
    background: linear-gradient(#f2f4f7, #d5dae1);
}

.vlines {
    width: 8px;
    height: 7px;
    background: repeating-linear-gradient(to right, #777 0 1px, transparent 1px 2px);
}

.htrack {
    flex: 30;
}

/* status bar */

.status {
    flex: none;
    display: flex;
    align-items: center;
    height: 21px;
    padding-right: 4px;
    border-top: 1px solid #f4f5f6;
    background: linear-gradient(#dfe1e4, #bfc2c7);
    font-size: 11px;
}

.ready {
    width: 49px;
    padding-left: 8px;
    border-right: 1px solid #8c9097;
    line-height: 19px;
}

.views {
    display: flex;
    align-items: center;
    margin-left: auto;
    padding-left: 4px;
    border-left: 1px solid #8c9097;
}

.view-button {
    display: flex;
    align-items: center;
    justify-content: center;
    width: 19px;
    height: 19px;
    padding: 0;
    border: none;
    background: none;
}

.view-button.on {
    border: 1px solid #c29331;
    border-radius: 3px;
    background: #ffe07d;
}

.percent {
    width: 44px;
    text-align: center;
}

.round {
    display: flex;
    align-items: center;
    justify-content: center;
    width: 16px;
    height: 16px;
    padding: 0;
    border: 1px solid #666;
    border-radius: 50%;
    background: #f1f2f4;
}

.zoom {
    width: 100px;
    height: 14px;
    margin: 0;
    background: linear-gradient(#7d838c, #7d838c) center / 100% 1px no-repeat;
    -webkit-appearance: none;
    appearance: none;
}

.zoom::-webkit-slider-thumb {
    -webkit-appearance: none;
    width: 9px;
    height: 12px;
    border: 1px solid #666;
    border-radius: 1px 1px 5px 5px;
    background: #f7f8f9;
}

.taskbar {
    flex: none;
    display: flex;
    height: 4px;
    border-top: 1px solid #1b4fb5;
    background: linear-gradient(to right, #2f78e6 92%, #19b0f0 93%);
}

.start {
    width: 95px;
    border-radius: 0 4px 0 0;
    background: #3c9a3c;
}
```
FILE: script.js
```js
// Staff name, basic salary and bonus, from row 4 down
const staff = [
    ['Akinlotan', '48,000.00', '2,650.00'],
    ['Al Said', '26,598.00', '1,579.90'],
    ['Brown', '14,567.00', '345.00'],
    ['Callus', '97,000.00', '5,100.00'],
    ['Cortes', '16,500.00', '1,075.00'],
    ['Corwall', '23,456.00', '1,422.80'],
    ['Dalloway', '26,748.00', '1,587.40'],
    ['Day', '9,000.00', '700.00'],
    ['Dodgson', '34,567.00', '1,978.35'],
    ['Duck', '12,500.00', '875.00'],
    ['Gupta', '45,673.00', '2,533.65'],
    ['Hill', '54,327.00', '2,966.35'],
    ['Hull', '24,567.00', '1,239.00'],
    ['Huntington', '10,750.00', '787.50'],
    ['Hyde', '67,895.00', '3,644.75'],
    ['Jekyll', '34,987.00', '1,999.35'],
    ['Jospin', '35,000.00', '4,567.00'],
    ['Lazarus', '8,500.00', '675.00'],
    ['Minniver', '23,145.00', '1,407.25'],
    ['Mulley', '9,543.00', '727.15'],
    ['Olivelle', '20,000.00', '1,250.00'],
    ['Plod', '29,876.00', '3,425.00'],
    ['Pullen', '7,689.00', '634.45'],
    ['Richards', '15,678.00', '1,033.90'],
    ['Robinson', '15,467.00', '1,023.35'],
    ['Ross', '12,500.00', '875.00'],
    ['Sharfiz', '46,342.00', '2,567.10'],
    ['Siromalaka Co', '58,786.00', '3,889.30']
];

const letters = 'ABCDEFGHIJKLMN'.split('');
const emptyCells = '<td></td>'.repeat(letters.length - 3);
const filterButton = '<button class="filter" aria-label="Filter"><i class="arrow"></i></button>';

// Column widths and headings
document.getElementById('cols').innerHTML =
    '<col class="col-head"><col class="col-a"><col class="col-b"><col class="col-c">' +
    '<col>'.repeat(letters.length - 3);
document.getElementById('letters').innerHTML =
    '<th class="head select-all"></th>' +
    letters.map(letter => '<th class="head">' + letter + '</th>').join('');

function row(number, cells) {
    return '<tr><th class="head">' + number + '</th>' + cells + emptyCells + '</tr>';
}

function money(value) {
    return '<div class="cell money"><span>£</span><span>' + value + '</span></div>';
}

let html = row(1,
    '<td class="shaded">Department</td>' +
    '<td class="shaded"><div class="cell">(All)' + filterButton + '</div></td><td></td>');
html += row(2, '<td></td><td></td><td></td>');
html += row(3,
    '<td class="shaded bold"><div class="cell">Staff' + filterButton + '</div></td>' +
    '<td class="shaded bold">Basic Salary</td><td class="shaded bold">Bonus</td>');

staff.forEach(function(person, index) {
    html += row(index + 4,
        '<td class="filled">' + person[0] + '</td>' +
        '<td class="filled">' + money(person[1]) + '</td>' +
        '<td class="filled last">' + money(person[2]) + '</td>');
});

document.getElementById('rows').innerHTML = html;
```
